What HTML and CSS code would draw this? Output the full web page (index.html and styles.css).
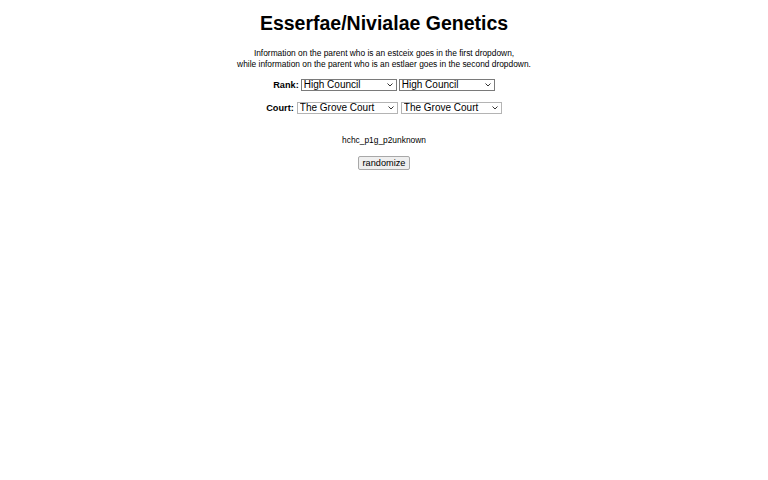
FILE: index.html
```html
<!DOCTYPE html>
<html>
<head>
<meta charset="utf-8">
<link rel="stylesheet" href="styles.css">
</head>
<body>
<h1 class="title">Esserfae/Nivialae Genetics</h1>
<p class="intro">Information on the parent who is an estceix goes in the first dropdown,<br>while information on the parent who is an estlaer goes in the second dropdown.</p>
<div class="row row-rank">
  <label class="lbl">Rank:</label>
  <span class="selwrap sel-rank"><select class="sel"><option>High Council</option></select><svg class="chev" viewBox="0 0 6 4" width="6" height="4"><path d="M0.5 0.5 L3 3 L5.5 0.5" fill="none" stroke="#333" stroke-width="1"/></svg></span>
  <span class="selwrap sel-rank"><select class="sel"><option>High Council</option></select><svg class="chev" viewBox="0 0 6 4" width="6" height="4"><path d="M0.5 0.5 L3 3 L5.5 0.5" fill="none" stroke="#333" stroke-width="1"/></svg></span>
</div>
<div class="row row-court">
  <label class="lbl">Court:</label>
  <span class="selwrap sel-court"><select class="sel"><option>The Grove Court</option></select><svg class="chev" viewBox="0 0 6 4" width="6" height="4"><path d="M0.5 0.5 L3 3 L5.5 0.5" fill="none" stroke="#333" stroke-width="1"/></svg></span>
  <span class="selwrap sel-court"><select class="sel"><option>The Grove Court</option></select><svg class="chev" viewBox="0 0 6 4" width="6" height="4"><path d="M0.5 0.5 L3 3 L5.5 0.5" fill="none" stroke="#333" stroke-width="1"/></svg></span>
</div>
<p class="result">hchc_p1g_p2unknown</p>
<div class="row row-btn"><button class="btn">randomize</button></div>
</body>
</html>
```
FILE: styles.css
```css
body {
  margin: 0;
  padding: 12px 0 0;
  font-family: "Liberation Sans", Arial, sans-serif;
  font-size: 8.4px;
  color: #000;
  background: #fff;
  text-align: center;
}
.title {
  font-size: 19.5px;
  line-height: 22px;
  font-weight: bold;
  margin: 0 0 13.5px;
}
.intro {
  margin: 0 0 9.5px;
  line-height: 11px;
}
.row {
  display: flex;
  justify-content: center;
  align-items: center;
  gap: 2px;
  height: 12px;
}
.row-rank { margin-bottom: 11px; }
.row-court { margin-bottom: 20.5px; gap: 3px; }
.row-btn { height: 14px; }
.lbl {
  font-weight: bold;
  font-size: 9.2px;
  line-height: 12px;
}
.selwrap {
  position: relative;
  display: inline-block;
  height: 12px;
}
.sel {
  -webkit-appearance: none;
  appearance: none;
  display: block;
  width: 100%;
  height: 12px;
  margin: 0;
  padding: 0 10px 0 2px;
  font-family: "Liberation Sans", Arial, sans-serif;
  font-size: 10px;
  line-height: 10px;
  color: #000;
  background: #fff;
  border: 1px solid #7a7a7a;
  border-radius: 0;
  box-sizing: border-box;
}
.sel-rank { width: 96px; }
.sel-court { width: 101px; }
.sel-court .sel { border-color: #b4b4b4; }
.chev {
  position: absolute;
  right: 4px;
  top: 4px;
  pointer-events: none;
}
.result {
  margin: 0 0 10.5px;
  line-height: 11px;
}
.btn {
  font-family: "Liberation Sans", Arial, sans-serif;
  font-size: 9.2px;
  height: 14px;
  padding: 0 4px;
  line-height: 12px;
  color: #000;
  background: #efefef;
  border: 1px solid #a8a8a8;
  border-radius: 2px;
  box-sizing: border-box;
}
```
